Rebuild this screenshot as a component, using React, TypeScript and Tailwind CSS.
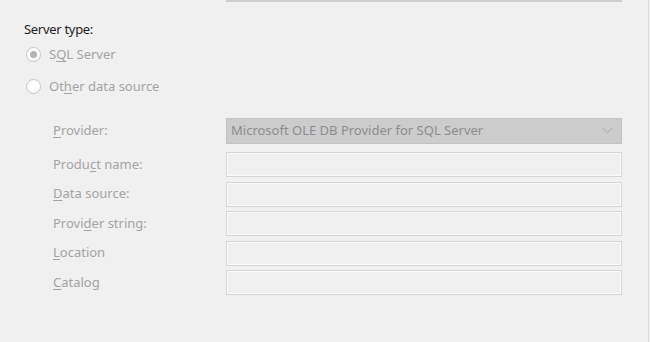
import React from 'react';

const font = {fontFamily: '"Noto Sans", "Open Sans", sans-serif'};

// label with an underlined access key
const Key = ({text, at}: {text: string; at: number}) => (
  <>
    {text.slice(0, at)}
    <span className="underline underline-offset-2 decoration-1">{text[at]}</span>
    {text.slice(at + 1)}
  </>
);

const fields = [
  {text: 'Product name:', at: 5},
  {text: 'Data source:', at: 0},
  {text: 'Provider string:', at: 5},
  {text: 'Location', at: 0},
  {text: 'Catalog', at: 0},
];

const Radio = ({checked, label, at}: {checked?: boolean; label: string; at: number}) => (
  <div className="flex items-center h-[20px]">
    <span className="w-[15px] h-[15px] rounded-full border border-[#c4c4c4] bg-white flex items-center justify-center">
      {checked && <span className="w-[7px] h-[7px] rounded-full bg-[#b4b4b4]" />}
    </span>
    <span className="ml-[8px] text-[13px] text-[#a3a3a3]">
      <Key text={label} at={at} />
    </span>
  </div>
);

export default function App() {
  return (
    <div className="w-[650px] h-[342px] bg-[#f0f0f0] overflow-hidden" style={font}>
      <div className="w-[649px] h-full border-r border-[#dcdcdc]">
        <div className="ml-[226px] w-[396px] h-[2px] border-b-2 border-[#cfcfcf]" />

        <div className="pl-[24px] pt-[18px] text-[13px] text-[#1e1e1e] tracking-[-0.3px]">Server type:</div>

        <div className="pl-[26px] pt-[5px] flex flex-col gap-[12px]">
          <Radio checked label="SQL Server" at={1} />
          <Radio label="Other data source" at={2} />
        </div>

        <div className="pl-[53px] pt-[21px] grid grid-cols-[173px_396px] items-center gap-y-[4.5px] text-[13px] text-[#a3a3a3]">
          <div className="mb-[4px]"><Key text="Provider:" at={0} /></div>
          <div className="h-[26px] mb-[4px] bg-[#cccccc] border border-[#c3c3c3] flex items-center pl-[4px] pr-[8px] text-[#8c8c8c]">
            <span className="flex-1">Microsoft OLE DB Provider for SQL Server</span>
            <svg width="11" height="7" viewBox="0 0 11 7" fill="none" stroke="#a9a9a9" strokeWidth="1">
              <path d="M0.5 0.8 L5.5 5.8 L10.5 0.8" />
            </svg>
          </div>
          {fields.map((f) => (
            <React.Fragment key={f.text}>
              <div><Key text={f.text} at={f.at} /></div>
              <div className="h-[25px] border border-[#d6d6d6] shadow-[inset_0_0_0_1px_#fafafa]" />
            </React.Fragment>
          ))}
        </div>
      </div>
    </div>
  );
}
